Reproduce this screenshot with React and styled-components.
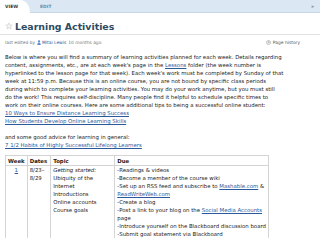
import styled, { createGlobalStyle } from 'styled-components';

const Global = createGlobalStyle`
  html, body { margin: 0; padding: 0; background: #fff; }
  body {
    width: 320px;
    height: 240px;
    overflow: hidden;
    font-family: "DejaVu Sans", "Liberation Sans", sans-serif;
    color: #222;
  }
`;

const TabBar = styled.div`
  display: flex;
  align-items: flex-end;
  height: 12px;
  background: #dbe8f3;
  border-bottom: 1px solid #c6d8e8;
`;

const Tab = styled.div`
  width: ${p => p.$w}px;
  display: flex;
  align-items: center;
  padding-left: ${p => p.$pad}px;
  box-sizing: border-box;
  font-size: 4.4px;
  font-weight: bold;
  letter-spacing: 0.1px;
  color: ${p => (p.$active ? '#333' : '#6b8aa5')};
  background: ${p => (p.$active ? '#fff' : 'transparent')};
  border-top-right-radius: ${p => (p.$active ? '10px 12px' : '0')};
  margin-bottom: ${p => (p.$active ? '-1px' : '0')};
  height: ${p => (p.$active ? '13px' : '12px')};
`;

const More = styled.span`
  margin-left: auto;
  margin-right: 6px;
  align-self: center;
  font-size: 5px;
  color: #555;
`;

const Page = styled.div`
  padding: 0 5px;
`;

const TitleRow = styled.div`
  display: flex;
  align-items: center;
  gap: 2px;
  padding-top: 5px;
  height: 16px;
`;

const Title = styled.h1`
  margin: 0;
  font-size: 9.4px;
  font-weight: bold;
  color: #2d4b62;
`;

const Meta = styled.div`
  display: flex;
  align-items: center;
  border-top: 1px solid #e3e3e3;
  margin: 0 -5px;
  padding: 3px 5px 0 5px;
  height: 9px;
  font-size: 4.4px;
  color: #777;
`;

const User = styled.span`
  display: inline-flex;
  align-items: center;
  gap: 1px;
  margin: 0 2px;
  color: #2a5a9c;
`;

const History = styled.span`
  margin-left: auto;
  margin-right: 15px;
  display: inline-flex;
  align-items: center;
  gap: 2px;
  color: #555;
`;

const Body = styled.div`
  padding-top: 6px;
  font-size: 5.4px;
  line-height: 8px;
  white-space: nowrap;
  color: #222;
`;

const Para = styled.p`
  margin: ${p => p.$top || 0}px 0 0 0;
`;

const A = styled.a`
  color: #2a5a9c;
  text-decoration: underline;
`;

const Table = styled.table`
  border-collapse: collapse;
  margin-top: 6px;
  width: 264px;
  font-size: 5.4px;
  line-height: 8px;
  white-space: nowrap;

  th, td {
    border: 1px solid #d4d4d4;
    padding: 0 2px;
    text-align: left;
    vertical-align: top;
  }
  th {
    font-weight: bold;
    padding-top: 1px;
  }
  td {
    border-bottom: none;
  }
`;

const Center = styled.td`
  && { text-align: center; }
`;

function Star() {
  return (
    <svg width="8" height="8" viewBox="0 0 24 24">
      <path
        d="M12 2.5l2.9 6.3 6.8.7-5.1 4.6 1.5 6.7L12 17.3l-6.1 3.5 1.5-6.7-5.1-4.6 6.8-.7z"
        fill="#f4f4f4"
        stroke="#c9c9c9"
        strokeWidth="1.6"
      />
    </svg>
  );
}

function UserIcon() {
  return (
    <svg width="4" height="5" viewBox="0 0 8 10">
      <circle cx="4" cy="3" r="2.3" fill="#5b8fd0" />
      <path d="M0.5 10c0-3 1.6-4.3 3.5-4.3S7.5 7 7.5 10z" fill="#5b8fd0" />
    </svg>
  );
}

function HistoryIcon() {
  return (
    <svg width="5" height="5" viewBox="0 0 10 10">
      <circle cx="5" cy="5" r="4.2" fill="#eee" stroke="#999" strokeWidth="1" />
      <path d="M5 2.5V5h2" stroke="#777" strokeWidth="1" fill="none" />
    </svg>
  );
}

export default function App() {
  return (
    <>
      <Global />
      <TabBar>
        <Tab $active $w={30} $pad={5}>VIEW</Tab>
        <Tab $w={30} $pad={10}>EDIT</Tab>
        <More>»</More>
      </TabBar>
      <Page>
        <TitleRow>
          <Star />
          <Title>Learning Activities</Title>
        </TitleRow>
        <Meta>
          last edited by
          <User><UserIcon />Mitai Lewis</User>
          10 months ago
          <History><HistoryIcon />Page history</History>
        </Meta>
        <Body>
          <Para>
            Below is where you will find a summary of learning activities planned for each week. Details regarding<br />
            content, assignments, etc., are at each week's page in the <A>Lessons</A> folder (the week number is<br />
            hyperlinked to the lesson page for that week). Each week's work must be completed by Sunday of that<br />
            week at 11:59 p.m. Because this is an online course, you are not bound by specific class periods<br />
            during which to complete your learning activities. You may do your work anytime, but you must still<br />
            do the work! This requires self-discipline. Many people find it helpful to schedule specific times to<br />
            work on their online courses. Here are some additional tips to being a successful online student:<br />
            <A>10 Ways to Ensure Distance Learning Success</A><br />
            <A>How Students Develop Online Learning Skills</A>
          </Para>
          <Para $top={8}>
            and some good advice for learning in general:<br />
            <A>7 1/2 Habits of Highly Successful Lifelong Learners</A>
          </Para>
        </Body>
        <Table>
          <thead>
            <tr>
              <th style={{ width: 16 }}>Week</th>
              <th style={{ width: 19 }}>Dates</th>
              <th style={{ width: 66 }}>Topic</th>
              <th>Due</th>
            </tr>
          </thead>
          <tbody>
            <tr>
              <Center><A>1</A></Center>
              <td>8/23–<br />8/29</td>
              <td>
                <i>Getting started:</i><br />
                Ubiquity of the<br />
                Internet<br />
                Introductions<br />
                Online accounts<br />
                Course goals
              </td>
              <td>
                -Readings &amp; videos<br />
                -Become a member of the course wiki<br />
                -Set up an RSS feed and subscribe to <A>Mashable.com</A> &amp;<br />
                <A>ReadWriteWeb.com</A><br />
                -Create a blog<br />
                -Post a link to your blog on the <A>Social Media Accounts</A><br />
                page<br />
                -Introduce yourself on the Blackboard discussion board<br />
                -Submit goal statement via Blackboard
              </td>
            </tr>
          </tbody>
        </Table>
      </Page>
    </>
  );
}
